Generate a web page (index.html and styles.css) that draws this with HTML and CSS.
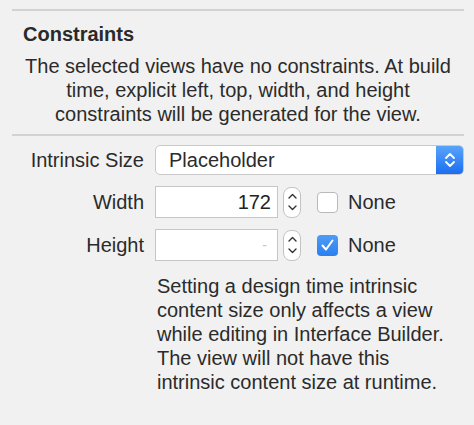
FILE: index.html
```html
<!DOCTYPE html>
<html lang="en">
<head>
    <meta charset="UTF-8">
    <meta name="viewport" content="width=device-width, initial-scale=1.0">
    <title>Size Inspector</title>
    <link rel="stylesheet" href="styles.css">
</head>
<body>
<div class="panel">
    <div class="divider first"></div>
    <h2>Constraints</h2>
    <p class="desc">The selected views have no constraints. At build<br>time, explicit left, top, width, and height<br>constraints will be generated for the view.</p>
    <div class="divider"></div>

    <div class="form">
        <label class="label">Intrinsic Size</label>
        <div class="popup">
            <span class="popup-text">Placeholder</span>
            <span class="popup-arrows">
                <svg width="12" height="18" viewBox="0 0 12 18"><path d="M2 7 L6 3 L10 7 M2 11 L6 15 L10 11" fill="none" stroke="#fff" stroke-width="1.8" stroke-linecap="round" stroke-linejoin="round"/></svg>
            </span>
        </div>

        <label class="label">Width</label>
        <div class="row">
            <div class="field">172</div>
            <div class="stepper">
                <svg width="11" height="24" viewBox="0 0 11 24"><path d="M2 8 L5.5 4.5 L9 8 M2 16 L5.5 19.5 L9 16" fill="none" stroke="#333" stroke-width="1.4" stroke-linecap="round" stroke-linejoin="round"/></svg>
            </div>
            <span class="check"></span>
            <span class="check-label">None</span>
        </div>

        <label class="label">Height</label>
        <div class="row">
            <div class="field empty">-</div>
            <div class="stepper">
                <svg width="11" height="24" viewBox="0 0 11 24"><path d="M2 8 L5.5 4.5 L9 8 M2 16 L5.5 19.5 L9 16" fill="none" stroke="#333" stroke-width="1.4" stroke-linecap="round" stroke-linejoin="round"/></svg>
            </div>
            <span class="check on">
                <svg width="21" height="21" viewBox="0 0 21 21"><path d="M5.5 10.5 L9 14.5 L15.5 5.5" fill="none" stroke="#fff" stroke-width="2" stroke-linecap="round" stroke-linejoin="round"/></svg>
            </span>
            <span class="check-label">None</span>
        </div>

        <p class="note">Setting a design time intrinsic<br>content size only affects a view<br>while editing in Interface Builder.<br>The view will not have this<br>intrinsic content size at runtime.</p>
    </div>
</div>
</body>
</html>
```

FILE: styles.css
```css
body {
    margin: 0;
    background-color: #f1f1f1;
    font-family: "Liberation Sans", Arial, sans-serif;
    color: #2b2b2b;
}

.panel {
    padding: 0 10px 0 12px;
}

.divider {
    height: 2px;
    background-color: #d2d2d2;
}

.divider.first {
    margin-top: 9px;
}

h2 {
    margin: 12px 0 0 11px;
    font-size: 20px;
    line-height: 22px;
    font-weight: bold;
    color: #2a2a2a;
}

.desc {
    margin: 9px 0 8px 0;
    font-size: 20px;
    line-height: 24px;
    text-align: center;
}

.form {
    display: grid;
    grid-template-columns: 132px 1fr;
    column-gap: 11px;
    row-gap: 11px;
    margin-top: 9px;
}

.label {
    font-size: 20px;
    text-align: right;
    align-self: center;
    color: #2b2b2b;
}

.popup {
    display: flex;
    height: 28px;
    background-color: #fff;
    border: 1px solid #c9c9c9;
    border-radius: 5px;
    overflow: hidden;
}

.popup-text {
    flex: 1;
    font-size: 20px;
    line-height: 28px;
    padding-left: 13px;
}

.popup-arrows {
    width: 27px;
    display: flex;
    align-items: center;
    justify-content: center;
    background: linear-gradient(#59a4fa, #1a6ef2);
}

.row {
    display: flex;
    align-items: center;
}

.field {
    width: 115px;
    height: 30px;
    line-height: 30px;
    padding: 0 6px 0 0;
    background-color: #fff;
    border: 1px solid #c6c6c6;
    text-align: right;
    font-size: 20px;
    color: #222;
}

.field.empty {
    color: #c4c4c4;
    font-size: 14px;
    padding-right: 10px;
    width: 111px;
}

.stepper {
    width: 16px;
    height: 29px;
    margin-left: 5px;
    background-color: #fff;
    border: 1px solid #c3c3c3;
    border-radius: 8px;
    display: flex;
    align-items: center;
    justify-content: center;
}

.check {
    width: 19px;
    height: 19px;
    margin-left: 16px;
    background-color: #fff;
    border: 1px solid #b9b9b9;
    border-radius: 4px;
    display: flex;
}

.check.on {
    width: 21px;
    height: 21px;
    border: none;
    background: linear-gradient(#4f9cf6, #2b7ff0);
}

.check-label {
    margin-left: 10px;
    font-size: 20px;
}

.note {
    grid-column: 2;
    margin: 2px 0 0 2px;
    font-size: 20px;
    line-height: 24px;
}
```
